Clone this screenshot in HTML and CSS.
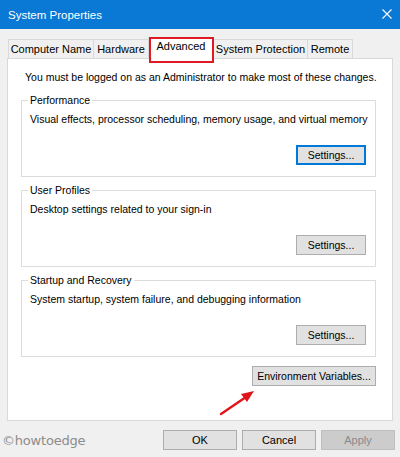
FILE: index.html
```html
<!DOCTYPE html>
<html>
<head>
<meta charset="utf-8">
<link rel="stylesheet" href="styles.css">
</head>
<body>
<div class="window">
  <div class="titlebar">
    <span class="title">System Properties</span>
    <svg class="close" width="10" height="10" viewBox="0 0 10 10"><path d="M0.5 0.5 L9.5 9.5 M9.5 0.5 L0.5 9.5" stroke="#fff" stroke-width="1.1" fill="none"/></svg>
  </div>
  <div class="tabs">
    <div class="tab t-name">Computer Name</div>
    <div class="tab t-hw">Hardware</div>
    <div class="tab t-adv active">Advanced</div>
    <div class="tab t-sp">System Protection</div>
    <div class="tab t-rem">Remote</div>
  </div>
  <div class="panel">
    <p class="note">You must be logged on as an Administrator to make most of these changes.</p>
    <fieldset class="group">
      <legend>Performance</legend>
      <p class="desc">Visual effects, processor scheduling, memory usage, and virtual memory</p>
      <div class="row"><button class="btn settings focused">Settings...</button></div>
    </fieldset>
    <fieldset class="group">
      <legend>User Profiles</legend>
      <p class="desc">Desktop settings related to your sign-in</p>
      <div class="row"><button class="btn settings">Settings...</button></div>
    </fieldset>
    <fieldset class="group">
      <legend>Startup and Recovery</legend>
      <p class="desc">System startup, system failure, and debugging information</p>
      <div class="row"><button class="btn settings">Settings...</button></div>
    </fieldset>
    <div class="envrow"><button class="btn env">Environment Variables...</button></div>
    <svg class="arrow" width="50" height="34" viewBox="0 0 50 34">
      <path d="M5 29 L30 12" stroke="#e0151b" stroke-width="2.4" stroke-linecap="round" fill="none"/>
      <path d="M38 6 L25 9 L31 17 Z" fill="#e0151b"/>
    </svg>
  </div>
  <div class="footer">
    <span class="mark">©howtoedge</span>
    <div class="buttons">
      <button class="btn dlg">OK</button>
      <button class="btn dlg">Cancel</button>
      <button class="btn dlg disabled">Apply</button>
    </div>
  </div>
</div>
</body>
</html>
```
FILE: styles.css
```css
* { box-sizing: border-box; }
html, body { margin: 0; padding: 0; }
body {
  width: 400px;
  height: 457px;
  background: #f0f0f0;
  font-family: "Liberation Sans", Arial, sans-serif;
  font-size: 10.5px;
  color: #000;
  overflow: hidden;
}
.window { width: 400px; height: 457px; }
.titlebar {
  height: 29px;
  background: #0a78d5;
  display: flex;
  align-items: center;
  justify-content: space-between;
  padding: 0 8px 0 8px;
  color: #fff;
}
.title { font-size: 11.5px; }
.close { margin-top: -1px; }

.tabs {
  display: flex;
  align-items: flex-end;
  height: 29px;
  padding-left: 8px;
}
.tab {
  height: 19px;
  border: 1px solid #d9d9d9;
  border-bottom: none;
  margin-left: -1px;
  background: #f0f0f0;
  display: flex;
  align-items: center;
  justify-content: center;
  line-height: 15px;
  white-space: nowrap;
  padding-top: 1px;
  font-size: 11px;
}
.tab:first-child { margin-left: 0; }
.t-name { width: 86px; }
.t-hw { width: 56px; }
.t-adv { width: 66px; }
.t-sp { width: 95px; }
.t-rem { width: 46px; }
.tab.active {
  height: 22px;
  margin-bottom: -1px;
  background: #fff;
  position: relative;
  z-index: 2;
  padding-top: 0;
  padding-bottom: 4px;
}
.tab.active::after {
  content: "";
  position: absolute;
  left: 0;
  right: -1px;
  top: -1px;
  bottom: -4px;
  border: 2px solid #df1a22;
}

.panel {
  position: relative;
  margin: 0 7px;
  height: 363px;
  background: #fff;
  border: 1px solid #d9d9d9;
  padding: 11px 16px 0 13px;
}
.note {
  margin: 0 0 8px 4px;
  line-height: 15px;
  white-space: nowrap;
}
.group {
  margin: 0 0 6px 0;
  padding: 4px 9px 10px 8px;
  border: 1px solid #dcdcdc;
  min-width: 0;
  height: 84px;
}
.group legend {
  padding: 0 2px;
  margin-left: -2px;
  line-height: 15px;
}
.desc {
  margin: 0;
  line-height: 15px;
  white-space: nowrap;
}
.row {
  display: flex;
  justify-content: flex-end;
  margin-top: 18px;
}
.btn {
  height: 20px;
  background: #e1e1e1;
  border: 1px solid #adadad;
  font-family: inherit;
  font-size: 10.5px;
  color: #000;
  padding: 0;
  line-height: 15px;
  white-space: nowrap;
}
.settings { width: 70px; }
.focused { border-color: #0078d7; box-shadow: inset 0 0 0 1px #0078d7; }
.envrow {
  display: flex;
  justify-content: flex-end;
  margin-top: 9px;
}
.env { width: 124px; }
.arrow {
  position: absolute;
  left: 208px;
  top: 326px;
}
.footer {
  display: flex;
  justify-content: space-between;
  align-items: center;
  padding: 9px 5px 0 2px;
}
.mark {
  font-family: "DejaVu Sans", sans-serif;
  font-size: 13px;
  color: #8c8c8c;
  letter-spacing: -0.2px;
}
.buttons { display: flex; gap: 5px; }
.dlg { width: 74px; font-size: 11px; }
.disabled {
  background: #cccccc;
  border-color: #bfbfbf;
  color: #8a8a8a;
}
```
